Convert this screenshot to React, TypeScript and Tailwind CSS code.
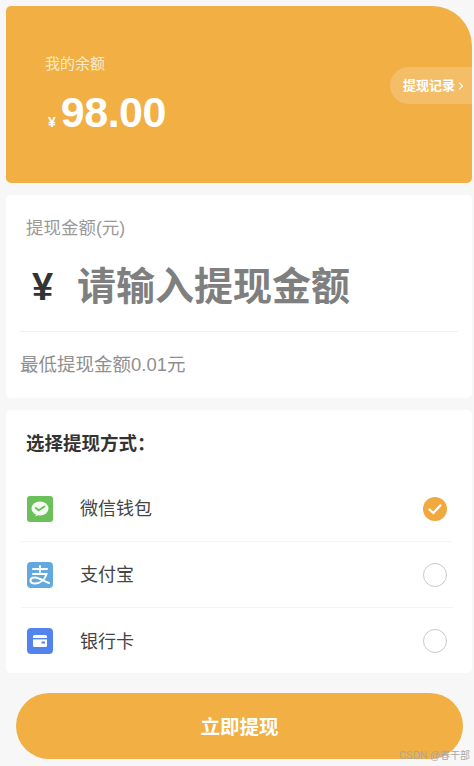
const cjk = "font-['Liberation_Sans','Noto_Sans_CJK_SC',sans-serif]";

function WechatIcon() {
  return (
    <svg viewBox="0 0 26 26" className="w-[26px] h-[26px]">
      <rect width="26" height="26" rx="3" fill="#6cc05a" />
      <ellipse cx="13" cy="12.500" rx="8.500" ry="7" fill="#f4faf1" />
      <path d="M8 20.500l2-3 2.500 1z" fill="#f4faf1" />
      <path d="M8.800 12l3 2.400 5.600-3.900" fill="none" stroke="#6cc05a" strokeWidth="1.900" strokeLinecap="round" />
    </svg>
  );
}

function AlipayIcon() {
  return (
    <svg viewBox="0 0 26 26" className="w-[26px] h-[26px]">
      <rect width="26" height="26" rx="4" fill="#62a9df" />
      <path
        d="M6 7h14M13 4v6M6 12h13.500C18 17 14 21.500 8 21.500c-3 0-4.500-1.300-4.500-3 0-2 2-3.200 4.500-3 4 .3 8 3 14 5.500"
        fill="none"
        stroke="#fff"
        strokeWidth="2"
        strokeLinecap="round"
      />
    </svg>
  );
}

function BankIcon() {
  return (
    <svg viewBox="0 0 26 26" className="w-[26px] h-[26px]">
      <rect width="26" height="26" rx="4" fill="#5384ee" />
      <rect x="6" y="7" width="14" height="12" rx="1.500" fill="#fff" />
      <rect x="6" y="10" width="14" height="1.400" fill="#5384ee" />
      <rect x="14.500" y="13.500" width="3.500" height="2" rx="0.600" fill="#5384ee" />
    </svg>
  );
}

const methods = [
  { name: "微信钱包", icon: <WechatIcon />, checked: true },
  { name: "支付宝", icon: <AlipayIcon />, checked: false },
  { name: "银行卡", icon: <BankIcon />, checked: false },
];

export default function App() {
  return (
    <div className={`relative w-[474px] h-[766px] overflow-hidden bg-[#f7f7f7] pt-[6px] pl-[6px] pr-[2px] ${cjk}`}>
      {/* balance */}
      <div className="relative h-[177px] bg-[#f1af44] rounded-[5px] rounded-tr-[40px] pl-[39px] pt-[48px]">
        <div className="text-[15px] leading-[20px] text-[#fbeacb]">我的余额</div>
        <div className="flex items-baseline mt-[13px] text-white font-bold">
          <span className="text-[14px] ml-[3px] mr-[5px]">¥</span>
          <span className="text-[43px] leading-[50px] tracking-[-0.5px]">98.00</span>
        </div>
        <div className="absolute right-0 top-[61px] h-[37px] w-[82px] rounded-l-full bg-[#f4be68] flex items-center pl-[13px] gap-[3px] text-white text-[13px] font-bold">
          提现记录
          <svg viewBox="0 0 8 12" className="w-[6px] h-[10px]">
            <path d="M1.500 1.500L6 6l-4.500 4.500" fill="none" stroke="#fff" strokeWidth="1.500" />
          </svg>
        </div>
      </div>

      {/* amount */}
      <div className="mt-[12px] h-[203px] bg-white rounded-[5px] px-[14px]">
        <div className="pl-[6px] pt-[22px] text-[17.500px] leading-[22px] text-[#999999]">提现金额(元)</div>
        <div className="flex items-center h-[44px] mt-[26px] pl-[12px]">
          <span className="text-[38px] font-bold text-[#333333] w-[45px]">¥</span>
          <span className="text-[39px] leading-[44px] font-bold text-[#7f7f7f] whitespace-nowrap">请输入提现金额</span>
        </div>
        <div className="mt-[22px] border-t border-[#f2f2f2] pt-[21px] text-[18.500px] leading-[24px] text-[#8f8f8f]">
          最低提现金额0.01元
        </div>
      </div>

      {/* methods */}
      <div className="mt-[12px] h-[263px] bg-white rounded-[5px] px-[15px]">
        <div className="pl-[5px] pt-[22px] text-[18.500px] leading-[24px] font-bold text-[#333333]">选择提现方式：</div>
        <div className="mt-[20px] mr-[4px]">
          {methods.map((m, i) => (
            <div
              key={m.name}
              className={`flex items-center h-[66px] pl-[6px] pr-[6px] ${i < 2 ? "border-b border-[#f4f4f4]" : ""}`}
            >
              {m.icon}
              <span className="ml-[27px] flex-1 text-[18px] leading-[28px] pt-[1px] text-[#444444]">{m.name}</span>
              {m.checked ? (
                <svg viewBox="0 0 24 24" className="w-[24px] h-[24px]">
                  <circle cx="12" cy="12" r="12" fill="#f1a93f" />
                  <path d="M6.500 12.500l3.800 3.500 7-7.500" fill="none" stroke="#fff" strokeWidth="2.200" strokeLinecap="round" />
                </svg>
              ) : (
                <div className="w-[24px] h-[24px] rounded-full border-[1.500px] border-[#c9c9c9]" />
              )}
            </div>
          ))}
        </div>
      </div>

      {/* submit */}
      <div className="mt-[20px] ml-[10px] mr-[9px] h-[66px] rounded-full bg-[#f1af44] flex items-center justify-center pt-[3px] text-white text-[19.500px] font-bold">
        立即提现
      </div>

      <div className="absolute right-[4px] bottom-[4px] text-[10px] leading-[12px] text-[#a8a8a8]">CSDN @春干部</div>
    </div>
  );
}
